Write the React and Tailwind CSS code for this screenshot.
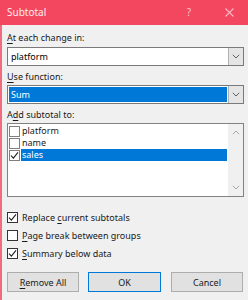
import React from "react";

const Chevron = ({ up = false, color = "#606060" }) => (
  <svg width="8" height="5" viewBox="0 0 8 5" className={up ? "rotate-180" : ""}>
    <path d="M0.8 0.8 L4 4 L7.2 0.8" fill="none" stroke={color} strokeWidth="1" />
  </svg>
);

const Check = () => (
  <svg width="9" height="9" viewBox="0 0 9 9">
    <path d="M1 4.6 L3.4 7.2 L8 1.4" fill="none" stroke="#222" strokeWidth="1.1" />
  </svg>
);

const Box = ({ checked, light, size = "w-[11px] h-[11px]" }) => (
  <div
    className={`${size} shrink-0 flex items-center justify-center bg-white border ${
      light ? "border-[#808080]" : "border-[#333]"
    }`}
  >
    {checked && <Check />}
  </div>
);

const Combo = ({ value, selected }) => (
  <div className="h-[19px] flex border border-[#7a7a7a] bg-white">
    <div className="flex-1 flex items-center p-[1px]">
      <div
        className={`h-full w-full flex items-center pl-[2px] ${
          selected ? "bg-[#0078d7] text-white" : "text-black"
        }`}
      >
        {value}
      </div>
    </div>
    <div className="w-[15px] flex items-center justify-center bg-[#e5e5e5] border-l border-[#b0b0b0]">
      <Chevron />
    </div>
  </div>
);

const U = ({ children }) => <span className="underline underline-offset-[1.5px]">{children}</span>;

export default function App() {
  return (
    <div
      className="w-[248px] h-[300px] bg-[#f0f0f0] text-[9px] leading-[13px] text-[#1a1a1a] flex flex-col"
      style={{ fontFamily: '"Noto Sans", "Open Sans", sans-serif' }}
    >
      <div className="h-[25px] shrink-0 bg-[#f2475f] flex items-center text-white">
        <span className="pl-[7px] flex-1 text-[10px] text-white/90">Subtotal</span>
        <span className="w-[12px] text-center text-[10px] text-white/70 mr-[29px]">?</span>
        <div className="w-[10px] mr-[14px] flex items-center justify-center">
          <svg width="9" height="9" viewBox="0 0 9 9">
            <path d="M0.5 0.5 L8.5 8.5 M8.5 0.5 L0.5 8.5" stroke="#f7b9c3" strokeWidth="1.1" />
          </svg>
        </div>
      </div>
      <div className="flex-1 border-l-2 border-[#f26a80] pl-[5px] pr-[4px] flex flex-col">
        <div className="mt-[6px] h-[13px]"><U>A</U>t each change in:</div>
        <div className="mt-[3px]">
          <Combo value="platform" />
        </div>
        <div className="mt-[4px] h-[13px]"><U>U</U>se function:</div>
        <div className="mt-[2px]">
          <Combo value="Sum" selected />
        </div>
        <div className="mt-[4px] h-[13px]">A<U>d</U>d subtotal to:</div>
        <div className="mt-[2px] h-[74px] border border-[#828282] bg-white flex">
          <div className="flex-1 flex flex-col pt-[1px]">
            {[
              ["platform", false],
              ["name", false],
              ["sales", true],
            ].map(([n, c]) => (
              <div key={n} className="h-[12px] flex items-center">
                <div className="w-[13px] flex items-center justify-center">
                  <Box checked={c} light />
                </div>
                <div
                  className={`flex-1 h-[12px] leading-[12px] pl-[1px] ${
                    c ? "bg-[#0078d7] text-white" : ""
                  }`}
                >
                  {n}
                </div>
              </div>
            ))}
          </div>
          <div className="w-[15px] ml-[1px] bg-[#f0f0f0] flex flex-col items-center justify-between py-[6px]">
            <Chevron up color="#a8a8a8" />
            <Chevron color="#a8a8a8" />
          </div>
        </div>
        <div className="mt-[13px] flex flex-col gap-[4px]">
          <div className="h-[14px] flex items-center gap-[4px]">
            <Box checked />
            <span>Replace <U>c</U>urrent subtotals</span>
          </div>
          <div className="h-[14px] flex items-center gap-[4px]">
            <Box />
            <span><U>P</U>age break between groups</span>
          </div>
          <div className="h-[14px] flex items-center gap-[4px]">
            <Box checked />
            <span><U>S</U>ummary below data</span>
          </div>
        </div>
        <div className="mt-[12px] flex gap-[9px]">
          <button className="w-[72px] h-[20px] bg-[#e1e1e1] border border-[#adadad] text-[9px]">
            <U>R</U>emove All
          </button>
          <button className="w-[73px] h-[20px] bg-[#e1e1e1] border border-[#0078d7] text-[9px]">
            OK
          </button>
          <button className="w-[72px] h-[20px] ml-[1px] bg-[#e1e1e1] border border-[#adadad] text-[9px]">
            Cancel
          </button>
        </div>
      </div>
    </div>
  );
}
